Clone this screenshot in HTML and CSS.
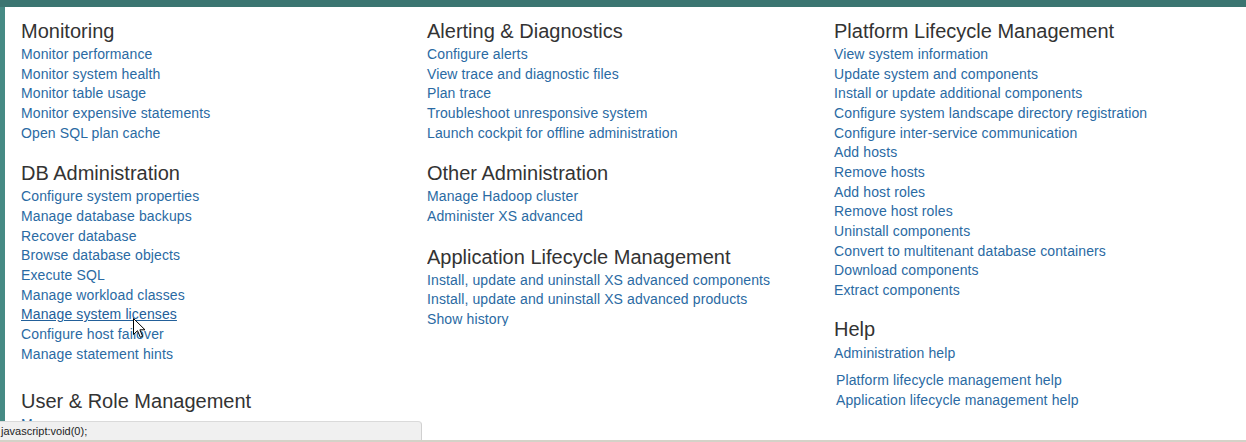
FILE: index.html
```html
<!DOCTYPE html>
<html>
<head>
<meta charset="utf-8">
<link rel="stylesheet" href="styles.css">
</head>
<body>
<div class="window">
  <div class="topbar"></div>
  <div class="main">
    <div class="columns">
      <div class="col">
        <section class="group">
          <h2>Monitoring</h2>
          <a href="#">Monitor performance</a>
          <a href="#">Monitor system health</a>
          <a href="#">Monitor table usage</a>
          <a href="#">Monitor expensive statements</a>
          <a href="#">Open SQL plan cache</a>
        </section>
        <section class="group">
          <h2>DB Administration</h2>
          <a href="#">Configure system properties</a>
          <a href="#">Manage database backups</a>
          <a href="#">Recover database</a>
          <a href="#">Browse database objects</a>
          <a href="#">Execute SQL</a>
          <a href="#">Manage workload classes</a>
          <a href="#" class="hover">Manage system licenses</a>
          <a href="#">Configure host failover</a>
          <a href="#">Manage statement hints</a>
        </section>
        <section class="group group-wide">
          <h2>User &amp; Role Management</h2>
          <a href="#">Manage users</a>
          <a href="#">Manage roles</a>
        </section>
      </div>
      <div class="col">
        <section class="group">
          <h2>Alerting &amp; Diagnostics</h2>
          <a href="#">Configure alerts</a>
          <a href="#">View trace and diagnostic files</a>
          <a href="#">Plan trace</a>
          <a href="#">Troubleshoot unresponsive system</a>
          <a href="#">Launch cockpit for offline administration</a>
        </section>
        <section class="group">
          <h2>Other Administration</h2>
          <a href="#">Manage Hadoop cluster</a>
          <a href="#">Administer XS advanced</a>
        </section>
        <section class="group clipped">
          <h2>Application Lifecycle Management</h2>
          <a href="#">Install, update and uninstall XS advanced components</a>
          <a href="#">Install, update and uninstall XS advanced products</a>
          <a href="#">Show history</a>
        </section>
      </div>
      <div class="col">
        <section class="group group-tight">
          <h2>Platform Lifecycle Management</h2>
          <a href="#">View system information</a>
          <a href="#">Update system and components</a>
          <a href="#">Install or update additional components</a>
          <a href="#">Configure system landscape directory registration</a>
          <a href="#">Configure inter-service communication</a>
          <a href="#">Add hosts</a>
          <a href="#">Remove hosts</a>
          <a href="#">Add host roles</a>
          <a href="#">Remove host roles</a>
          <a href="#">Uninstall components</a>
          <a href="#">Convert to multitenant database containers</a>
          <a href="#">Download components</a>
          <a href="#">Extract components</a>
        </section>
        <section class="group group-help">
          <h2>Help</h2>
          <a href="#">Administration help</a>
          <div class="subhelp">
            <a href="#">Platform lifecycle management help</a>
            <a href="#">Application lifecycle management help</a>
          </div>
        </section>
      </div>
    </div>
  </div>
  <div class="statusbar">javascript:void(0);</div>
  <div class="bottomline"></div>
  <svg class="cursor" width="13" height="21" viewBox="0 0 13 21">
    <path d="M0.5 0.5 L0.5 16.5 L4.5 12.7 L7.3 19.3 L9.6 18.3 L6.9 11.8 L12 11.8 Z" fill="#fff" stroke="#000" stroke-width="1" stroke-linejoin="miter"/>
  </svg>
</div>
</body>
</html>
```
FILE: styles.css
```css
html, body {
  margin: 0;
  padding: 0;
  background: #fff;
}
body {
  width: 1246px;
  height: 442px;
  overflow: hidden;
  font-family: "Liberation Sans", Arial, sans-serif;
}
.window {
  position: relative;
  width: 1246px;
  height: 442px;
  overflow: hidden;
  display: flex;
  flex-direction: column;
}
.topbar {
  height: 7px;
  flex: none;
  background: #3b7571;
}
.main {
  height: 433px;
  flex: none;
  overflow: hidden;
  border-left: 5px solid #468a84;
  box-sizing: border-box;
  padding: 13px 5px 0 16px;
}
.columns {
  display: grid;
  grid-template-columns: 406px 407px 1fr;
}
.col {
  display: flex;
  flex-direction: column;
}
.group {
  display: flex;
  flex-direction: column;
  margin-bottom: 19px;
}
.group-tight {
  margin-bottom: 17px;
}
.group-wide {
  margin-top: 7px;
}
.group h2 {
  margin: 0 0 3px;
  font-size: 20px;
  line-height: 22px;
  font-weight: normal;
  color: #333;
}
.group-help h2 {
  margin-bottom: 4px;
}
.group a {
  font-size: 14px;
  line-height: 19.67px;
  letter-spacing: 0.12px;
  color: #2a6aa3;
  text-decoration: none;
  align-self: flex-start;
}
.group a.hover {
  text-decoration: underline;
  color: #23609a;
}
.clipped {
  height: 80px;
  overflow: hidden;
  flex: none;
}
.subhelp {
  display: flex;
  flex-direction: column;
  padding-left: 2px;
  margin-top: 7px;
}
.subhelp a {
  line-height: 20px;
}
.statusbar {
  position: absolute;
  left: 0;
  top: 421px;
  width: 420px;
  height: 18px;
  background: #f0f0f0;
  border-top: 1px solid #dadada;
  border-right: 1px solid #d0d0d0;
  border-top-right-radius: 4px;
  font-family: "Liberation Sans", Tahoma, sans-serif;
  font-size: 11px;
  line-height: 19px;
  color: #1e1e1e;
  padding-left: 1px;
}
.bottomline {
  position: absolute;
  left: 0;
  top: 440px;
  width: 1246px;
  height: 2px;
  background: #d4d2c8;
}
.cursor {
  position: absolute;
  left: 133px;
  top: 318px;
}
```
